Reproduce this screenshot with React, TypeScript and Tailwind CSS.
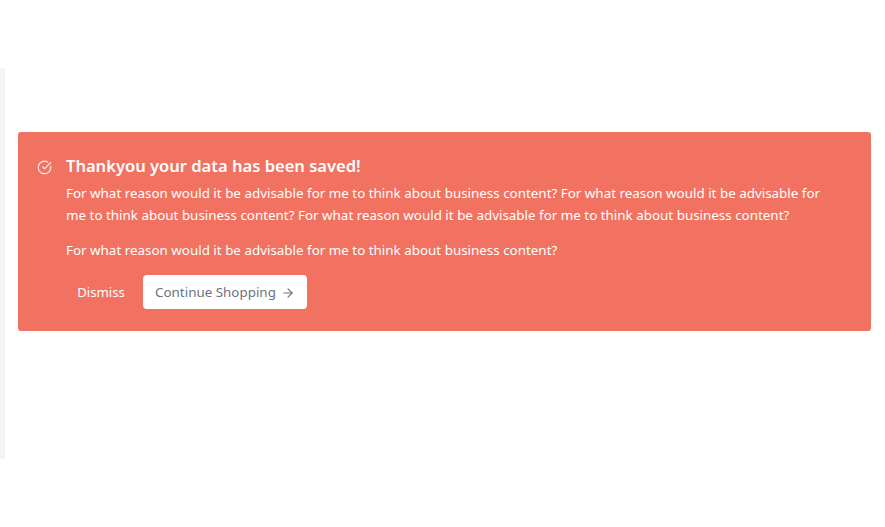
import { ArrowRight, CircleCheckBig } from "lucide-react";

const line = "For what reason would it be advisable for me to think about business content?";

const App = () => {
  return (
    <div className="h-[527px] w-[885px] overflow-hidden bg-white pt-[68px] font-['Noto_Sans',sans-serif]">
      <div className="flex h-[391px]">
        <div className="w-[5px] bg-[#f8f3f3]" />
        <div className="flex-1 pl-[13px] pr-[14px] pt-[64px]">
          <div className="flex h-[199px] rounded-[3px] bg-[#f17260] pl-[19px] pr-[40px] pt-[23px] text-white">
            <CircleCheckBig className="mt-[5px] h-[15px] w-[15px] text-[#fde3de]" strokeWidth={2} />
            <div className="ml-[14px] flex-1">
              <h3 className="text-[16.55px] font-semibold leading-[22px]">Thankyou your data has been saved!</h3>
              <p className="mt-[5px] text-[13.4px] leading-[22px]">
                {line} {line} {line}
              </p>
              <p className="mt-[13px] text-[13.4px] leading-[22px]">{line}</p>
              <div className="mt-[14px] flex items-center">
                <button className="w-[70px] pt-px text-center text-[13.2px]">Dismiss</button>
                <button className="ml-[7px] flex h-[34px] w-[164px] items-center gap-[5px] rounded-[4px] bg-white pl-[12px] pt-px text-[13.4px] text-[#6b7280]">
                  Continue Shopping
                  <ArrowRight className="h-[14px] w-[14px]" />
                </button>
              </div>
            </div>
          </div>
        </div>
      </div>
    </div>
  );
};

export default App;
